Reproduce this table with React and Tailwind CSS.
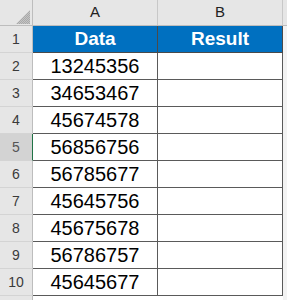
import React from 'react';

const ROWS = ['13245356', '34653467', '45674578', '56856756', '56785677', '45645756', '45675678', '56786757', '45645677'];

export default function App() {
    return (
        <div className="w-[287px] h-[300px] overflow-hidden bg-[#f3f3f3] font-['Liberation_Sans',Arial,sans-serif]">
            {/* Column headers */}
            <div className="flex h-[26px] bg-[#e6e6e6] border-b border-[#bdbdbd]">
                <div className="relative w-[33px] shrink-0 border-r border-[#bdbdbd]">
                    <svg className="absolute left-0 top-0" width="32" height="25" viewBox="0 0 32 25">
                        <defs>
                            <pattern id="hatch" width="2" height="2" patternUnits="userSpaceOnUse">
                                <rect width="2" height="2" fill="#c4c4c4" />
                                <rect width="1" height="1" fill="#a9a9a9" />
                                <rect x="1" y="1" width="1" height="1" fill="#a9a9a9" />
                            </pattern>
                        </defs>
                        <polygon points="30,10 30,24 16,24" fill="url(#hatch)" />
                    </svg>
                </div>
                <div className="w-[125px] shrink-0 border-r border-[#c8c8c8] flex items-center justify-center text-[15px] text-[#222]">A</div>
                <div className="w-[125px] shrink-0 border-r border-[#c8c8c8] flex items-center justify-center text-[15px] text-[#222]">B</div>
            </div>

            {/* Row 1 */}
            <div className="flex h-[27px]">
                <div className="w-[33px] shrink-0 bg-[#e6e6e6] border-r border-b border-r-[#bdbdbd] border-b-[#d4d4d4] flex items-center justify-center text-[14px] text-[#3a3a3a]">1</div>
                <div className="w-[125px] shrink-0 bg-[#0070c0] border-r border-b border-[#4a4a4a] flex items-center justify-center text-[19px] font-bold text-white">Data</div>
                <div className="w-[125px] shrink-0 bg-[#0070c0] border-r border-b border-[#4a4a4a] flex items-center justify-center text-[19px] font-bold text-white">Result</div>
            </div>

            {ROWS.map((v, i) => {
                const active = i === 3;
                return (
                    <div key={i} className="flex h-[27px]">
                        <div className={`w-[33px] shrink-0 border-r border-b border-b-[#d4d4d4] flex items-center justify-center text-[14px] ${active ? 'bg-[#d3d3d3] text-[#555] border-r-[#217346]' : 'bg-[#e6e6e6] text-[#3a3a3a] border-r-[#bdbdbd]'}`}>{i + 2}</div>
                        <div className="w-[125px] shrink-0 bg-white border-r border-b border-[#5a5a5a] flex items-center justify-center text-[20px] text-black">{v}</div>
                        <div className="w-[125px] shrink-0 bg-white border-r border-b border-[#5a5a5a]"></div>
                    </div>
                );
            })}
            <div className="flex h-[4px]">
                <div className="w-[33px] shrink-0 bg-[#e6e6e6] border-r border-[#bdbdbd]"></div>
                <div className="w-[250px] shrink-0 bg-white"></div>
            </div>
        </div>
    );
}
